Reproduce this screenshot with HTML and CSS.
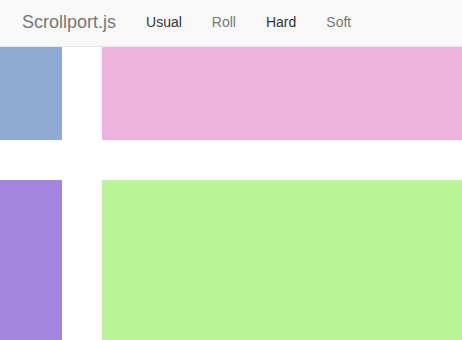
FILE: index.html
```html
<!DOCTYPE html>
<html>
<head>
<meta charset="utf-8">
<title>Scrollport.js</title>
<link rel="stylesheet" href="styles.css">
</head>
<body>
<nav class="navbar">
  <a class="brand" href="#">Scrollport.js</a>
  <ul class="nav">
    <li><a class="link dark" href="#">Usual</a></li>
    <li><a class="link" href="#">Roll</a></li>
    <li><a class="link dark" href="#">Hard</a></li>
    <li><a class="link" href="#">Soft</a></li>
  </ul>
</nav>
<main class="port">
  <div class="grid">
    <div class="tile blue"></div>
    <div class="tile pink"></div>
    <div class="tile purple"></div>
    <div class="tile green"></div>
  </div>
</main>
</body>
</html>
```
FILE: styles.css
```css
html, body {
  margin: 0;
  padding: 0;
  height: 100%;
  overflow: hidden;
  background: #fff;
  font-family: "Liberation Sans", Arial, sans-serif;
}
.navbar {
  display: flex;
  align-items: center;
  height: 46px;
  background: #f8f8f8;
  border-bottom: 1px solid #e7e7e7;
  box-sizing: content-box;
}
.brand {
  font-size: 18px;
  line-height: 20px;
  color: #777;
  text-decoration: none;
  padding: 0 15px 0 22px;
  position: relative;
  top: -1px;
}
.nav {
  display: flex;
  list-style: none;
  margin: 0;
  padding: 0;
}
.link {
  display: block;
  font-size: 14px;
  line-height: 20px;
  padding: 0 15px;
  color: #777;
  text-decoration: none;
  position: relative;
  top: -1px;
}
.link.dark {
  color: #333;
}
.port {
  overflow: hidden;
}
.grid {
  display: grid;
  grid-template-columns: 62px 360px;
  grid-template-rows: 93px 160px;
  gap: 40px;
}
.blue { background: #8fabd3; }
.pink { background: #eeb3dc; }
.purple { background: #a384df; }
.green { background: #b9f496; }
```
